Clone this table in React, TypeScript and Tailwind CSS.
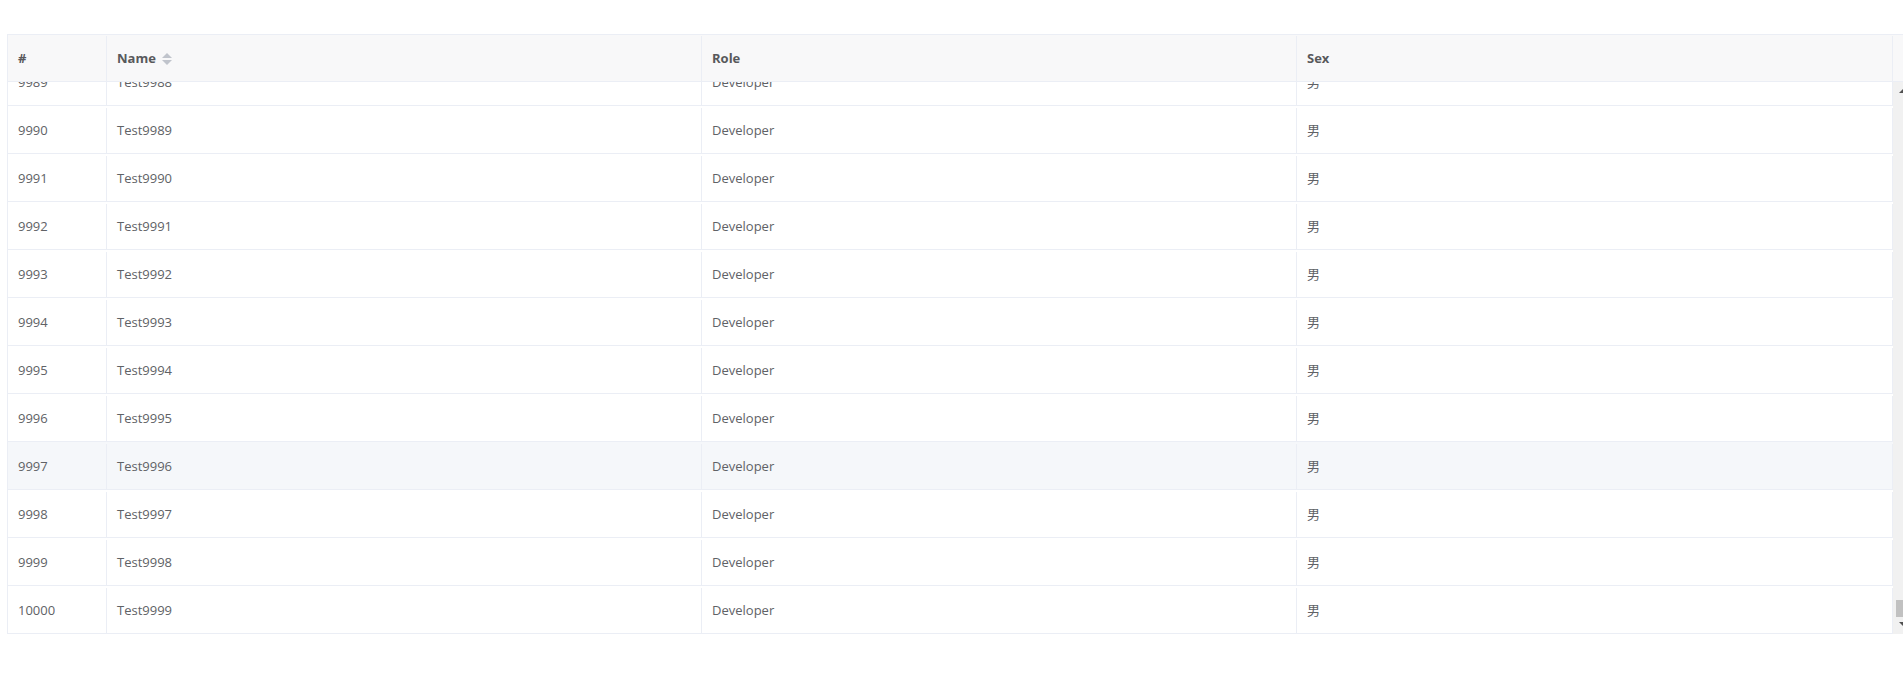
import React from "react";

const rows = Array.from({ length: 12 }, (_, i) => 9989 + i);
const hovered = 9997;

const cols = ["w-[99px]", "w-[595px]", "w-[595px]", "w-[596px]"];

function SortIcon() {
  return (
    <span className="ml-[6px] inline-flex flex-col gap-[2px]">
      <span className="h-0 w-0 border-x-[5px] border-b-[5px] border-x-transparent border-b-[#c0c4cc]" />
      <span className="h-0 w-0 border-x-[5px] border-t-[5px] border-x-transparent border-t-[#c0c4cc]" />
    </span>
  );
}

function Scrollbar() {
  return (
    <div className="flex h-[552px] w-[20px] shrink-0 flex-col bg-[#f1f1f1]">
      <span className="ml-[6px] mt-[7px] h-0 w-0 border-x-[4px] border-b-[4px] border-x-transparent border-b-[#505050]" />
      <div className="ml-[3px] mt-[507px] h-[17px] w-[14px] bg-[#c1c1c1]" />
      <span className="ml-[6px] mt-[5px] h-0 w-0 border-x-[4px] border-t-[4px] border-x-transparent border-t-[#505050]" />
    </div>
  );
}

export default function App() {
  return (
    <div className="h-[681px] w-[1903px] overflow-hidden bg-white pl-[7px] pt-[34px] font-['Open_Sans','Noto_Sans_CJK_SC',sans-serif] text-[13px]">
      <div className="w-[1906px] border-l border-t border-[#ebeef5]">
        {/* Header */}
        <div className="flex h-[47px] border-b border-[#ebeef5] bg-[#f8f8f9] pt-[1px] font-bold text-[#58595c]">
          <div className={`${cols[0]} flex items-center border-r border-[#ebeef5] px-[10px]`}>#</div>
          <div className={`${cols[1]} flex items-center border-r border-[#ebeef5] px-[10px]`}>
            Name
            <SortIcon />
          </div>
          <div className={`${cols[2]} flex items-center border-r border-[#ebeef5] px-[10px]`}>Role</div>
          <div className={`${cols[3]} flex items-center border-r border-[#ebeef5] px-[10px]`}>Sex</div>
          <div className="flex-1" />
        </div>

        {/* Body */}
        <div className="flex">
          <div className="h-[552px] overflow-hidden">
            <div className="-mt-[24px]">
              {rows.map((n) => (
                <div
                  key={n}
                  className={`flex h-[48px] border-b border-[#ebeef5] pt-[2px] text-[#606266] ${n === hovered ? "bg-[#f5f7fa]" : "bg-white"}`}
                >
                  <div className={`${cols[0]} flex items-center border-r border-[#ebeef5] px-[10px]`}>{n}</div>
                  <div className={`${cols[1]} flex items-center border-r border-[#ebeef5] px-[10px]`}>Test{n - 1}</div>
                  <div className={`${cols[2]} flex items-center border-r border-[#ebeef5] px-[10px]`}>Developer</div>
                  <div className={`${cols[3]} flex items-center border-r border-[#ebeef5] px-[10px]`}>男</div>
                </div>
              ))}
            </div>
          </div>
          <Scrollbar />
        </div>
      </div>
    </div>
  );
}
